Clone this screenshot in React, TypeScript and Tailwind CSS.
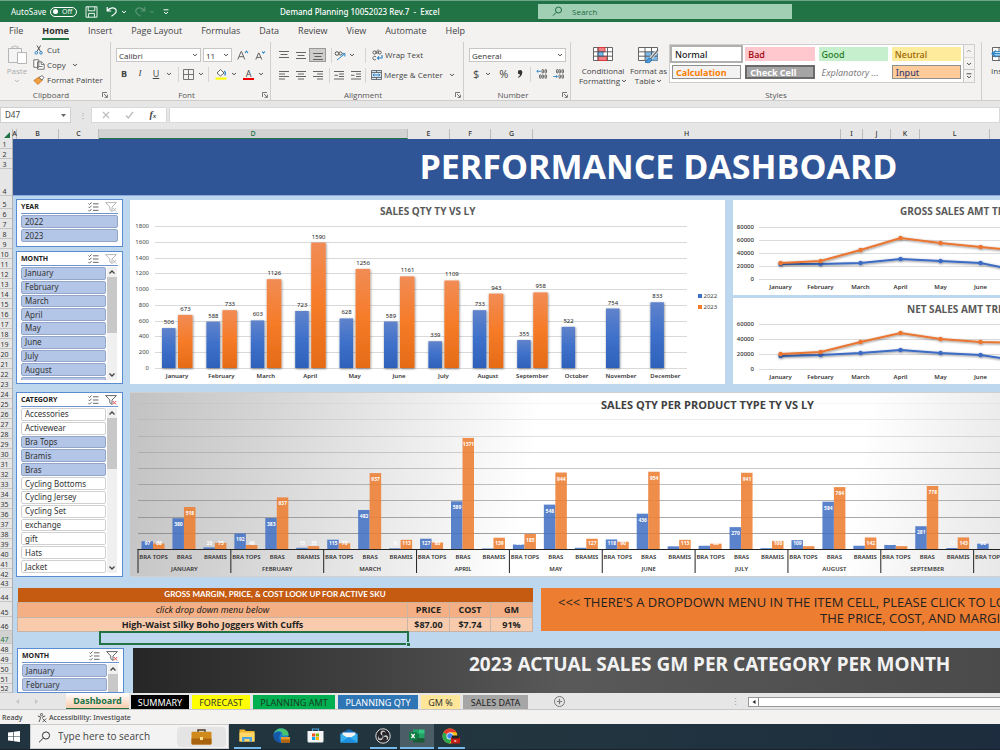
import type { ReactNode } from "react";

/* ---------- small shared pieces ---------- */

function Caret({ className = "text-[#555]" }: { className?: string }) {
  return (
    <svg width="6" height="4" viewBox="0 0 6 4" className={`shrink-0 ${className}`}>
      <path d="M1 1l2 1.8L5 1" fill="none" stroke="currentColor" strokeWidth="1" />
    </svg>
  );
}

function Divider() {
  return <span className="h-[15px] w-px bg-[#d6d4d2]" />;
}

function IconButton({ label, children, className = "" }: { label: string; children: ReactNode; className?: string }) {
  return (
    <button aria-label={label} className={`flex items-center justify-center ${className}`}>
      {children}
    </button>
  );
}

function Picker({ label, value, className }: { label: string; value: string; className: string }) {
  return (
    <span className={`flex items-center border border-[#c8c6c4] bg-white pr-[2px] ${className}`}>
      <select aria-label={label} defaultValue={value} className="min-w-0 flex-1 appearance-none bg-transparent pl-[2px] text-[8px] leading-[11px] text-[#333] outline-none">
        <option>{value}</option>
      </select>
      <Caret />
    </span>
  );
}

function Group({ name, launcher, className, children }: { name: string; launcher?: boolean; className: string; children: ReactNode }) {
  return (
    <section aria-label={name} className={`flex shrink-0 flex-col border-r border-[#d0cecc] ${className}`}>
      <div className="flex-1">{children}</div>
      <div className="flex h-[10px] items-center">
        <span className="flex-1 text-center text-[8px] leading-[10px] text-[#555]">{name}</span>
        {launcher && (
          <IconButton label={`${name} settings`} className="mr-[2px]">
            <svg width="6" height="6" viewBox="0 0 6 6" fill="none" stroke="#666" strokeWidth="0.9">
              <path d="M0.5 5V0.5H5M2 2l3 3M5.4 2.6V5.4H2.6" />
            </svg>
          </IconButton>
        )}
      </div>
    </section>
  );
}

/* ---------- title bar and ribbon ---------- */

function TitleBar() {
  return (
    <header className="flex h-[22px] shrink-0 items-center overflow-hidden border-t border-[#6da588] bg-[#217346] text-[8px] text-white">
      <div className="flex w-[280px] shrink-0 items-center pl-[11px]">
        <span className="w-[39px] font-['Noto_Sans',sans-serif]">AutoSave</span>
        <button role="switch" aria-checked="false" aria-label="AutoSave" className="flex h-[10px] w-[27px] items-center gap-[4px] rounded-full border border-white pl-[2px] text-[7px] leading-[8px]">
          <span className="size-[5px] rounded-full bg-white" />
          Off
        </button>
        <IconButton label="Save" className="ml-[8px]">
          <svg width="13" height="12" viewBox="0 0 13 12" fill="none" stroke="#fff" strokeWidth="0.9">
            <path d="M1 .8h11v10.4H1zM3.2.8v4h6.6v-4M3.6 11.2V7.4h5.8v3.8" />
          </svg>
        </IconButton>
        <IconButton label="Undo" className="ml-[8px] gap-[3px]">
          <svg width="12" height="11" viewBox="0 0 12 11" fill="none" stroke="#fff" strokeWidth="1.2">
            <path d="M1.2 1v4h4M1.4 4.800C3.400 2 7 1 9.200 2.800c2 1.800 1.600 4.200-3.700 7.500" />
          </svg>
          <Caret className="text-white" />
        </IconButton>
        <IconButton label="Redo" className="ml-[7px] gap-[3px] opacity-25">
          <svg width="12" height="11" viewBox="0 0 12 11" fill="none" stroke="#fff" strokeWidth="1.2">
            <path d="M10.800 1v4h-4M10.600 4.800C8.600 2 5 1 2.800 2.800c-2 1.800-1.600 4.200 3.700 7.500" />
          </svg>
          <Caret className="text-white" />
        </IconButton>
        <IconButton label="Customize toolbar" className="ml-[8px]">
          <svg width="6" height="6" viewBox="0 0 6 6" fill="none" stroke="#fff">
            <path d="M.5.8h5M1 3l2 1.800L5 3" />
          </svg>
        </IconButton>
      </div>
      <h1 className="w-[258px] shrink-0 font-['Noto_Sans',sans-serif] text-[8px] font-medium whitespace-nowrap">Demand Planning 10052023 Rev.7 &nbsp;-&nbsp; Excel</h1>
      <label className="flex h-[15px] w-[254px] items-center bg-[#a0cfb4] pl-[14px]">
        <svg width="11" height="11" viewBox="0 0 11 11" fill="none" stroke="#1e6b41" strokeWidth="1">
          <circle cx="6.500" cy="4" r="3" />
          <path d="M4.300 6.300L1 9.600" />
        </svg>
        <input aria-label="Search" placeholder="Search" className="ml-[9px] w-40 bg-transparent text-[8px] outline-none placeholder:text-[#1e6b41]" />
      </label>
    </header>
  );
}

const menu = ["File", "Home", "Insert", "Page Layout", "Formulas", "Data", "Review", "View", "Automate", "Help"];

function MenuTabs() {
  return (
    <nav className="flex h-[20px] shrink-0 items-start gap-[19px] bg-[#f3f2f1] pt-[2px] pl-[9px] text-[9px] leading-[14px] text-[#444]">
      {menu.map((m) => (
        <a key={m} href="#" className={m === "Home" ? "border-b-2 border-[#217346] font-bold text-[#333]" : "border-b-2 border-transparent"}>
          {m}
        </a>
      ))}
    </nav>
  );
}

function Lines({ d, box }: { d: string; box?: boolean }) {
  return (
    <span className={`flex h-[14px] w-[17px] items-center justify-center ${box ? "border border-[#999] bg-[#cfcdcb]" : ""}`}>
      <svg width="10" height="10" viewBox="0 0 10 10" fill="none" stroke="#555" strokeWidth="0.9">
        <path d={d} />
      </svg>
    </span>
  );
}

function ClipboardGroup() {
  return (
    <Group name="Clipboard" launcher className="w-[111px]">
      <div className="flex pl-[8px]">
        <button className="flex w-[18px] flex-col items-center pt-[3px] text-[8px] leading-[12px] text-[#aaa]">
          <svg width="21" height="20" viewBox="0 0 21 20" fill="#f4f4f4" stroke="#b5b5b5">
            <path d="M1.500 3.500h13v14h-13z" />
            <path d="M5 3.500V1.800h1.800C7 .5 9 .5 9.200 1.800H11v1.700z" />
            <path d="M10.500 7.500h9v11h-9z" fill="#fff" />
          </svg>
          Paste
          <Caret className="mt-[2px] text-[#bbb]" />
        </button>
        <div className="ml-[7px] flex flex-col text-[8px] leading-[15px] text-[#444]">
          <button className="flex items-center gap-[3px]">
            <svg width="11" height="10" viewBox="0 0 11 10" fill="none">
              <path d="M4 .5l3.500 6M7.500.5L4 6.500" stroke="#555" />
              <circle cx="3.300" cy="7.800" r="1.300" stroke="#2e86c8" />
              <circle cx="8" cy="7.800" r="1.300" stroke="#2e86c8" />
            </svg>
            Cut
          </button>
          <button className="flex items-center gap-[2px]">
            <svg width="12" height="11" viewBox="0 0 12 11" fill="#fff" stroke="#666" strokeWidth="0.900">
              <path d="M.8.8h5v7.500h-5zM4.500 2.800h4l2.700 2.400v5H4.500z" />
              <path d="M8.200 2.800v2.600h3M6 7.500h3.500" />
            </svg>
            Copy <Caret className="ml-[4px] text-[#555]" />
          </button>
          <button className="flex items-center gap-[2px] whitespace-nowrap">
            <svg width="12" height="10" viewBox="0 0 12 10">
              <path d="M6 2l3.500 3L5 9.500.8 5.500z" fill="#f0a040" stroke="#c0641a" strokeWidth="0.700" />
              <path d="M6 2.500L9 .6l2 1.800L9 5z" fill="#fff" stroke="#555" strokeWidth="0.800" />
            </svg>
            Format Painter
          </button>
        </div>
      </div>
    </Group>
  );
}

function FontGroup() {
  return (
    <Group name="Font" launcher className="w-[160px]">
      <div className="flex items-center gap-[2px] pt-[6px] pl-[5px]">
        <Picker label="Font name" value="Calibri" className="h-[14px] w-[85px]" />
        <Picker label="Font size" value="11" className="h-[14px] w-[29px]" />
        <button aria-label="Increase font size" className="ml-[3px]">
          <svg width="12" height="11" viewBox="0 0 12 11" fill="none">
            <path d="M.8 9.500L4.100 1.500h.4l3.300 8M2.200 6.700h4.200" stroke="#555" strokeWidth="0.900" />
            <path d="M8 3l1.500-1.800L11 3" stroke="#2e86c8" strokeWidth="1.100" />
          </svg>
        </button>
        <button aria-label="Decrease font size" className="ml-[4px]">
          <svg width="11" height="11" viewBox="0 0 11 11" fill="none">
            <path d="M.8 9.500L3.600 3H4l2.800 6.500M2 7.400h3.700" stroke="#555" strokeWidth="0.900" />
            <path d="M7 1.500L8.500 3.200 10 1.500" stroke="#2e86c8" strokeWidth="1.100" />
          </svg>
        </button>
      </div>
      <div className="flex h-[24px] items-center pl-[9px] text-[9px] text-[#444]">
        <button className="w-[8px] font-bold">B</button>
        <button className="ml-[8px] w-[8px] font-['Liberation_Serif',serif] italic">I</button>
        <button className="ml-[8px] w-[8px] underline">U</button>
        <Caret className="mx-[6px] text-[#555]" />
        <Divider />
        <IconButton label="Borders" className="ml-[4px]">
          <svg width="11" height="11" viewBox="0 0 11 11" fill="none" stroke="#666" strokeWidth="0.900">
            <path d="M.5.5h10v10H.5zM5.500.5v10M.5 5.500h10" />
          </svg>
        </IconButton>
        <Caret className="mx-[4px] text-[#555]" />
        <Divider />
        <IconButton label="Fill color" className="ml-[6px]">
          <svg width="12" height="12" viewBox="0 0 12 12">
            <path d="M2 5l3.500-3.500L9 5 5.500 8z" fill="#fff" stroke="#555" strokeWidth="0.900" />
            <path d="M9 3c1.600 1 1.600 3 .7 4.500" fill="none" stroke="#2e86c8" strokeWidth="1.300" />
            <path d="M.5 9.500h11v2.200H.5z" fill="#ff0" />
          </svg>
        </IconButton>
        <Caret className="mx-[4px] text-[#555]" />
        <button aria-label="Font color" className="ml-[2px] w-[11px] border-b-2 border-[#e00] text-[9px] leading-[9px]">
          A
        </button>
        <Caret className="ml-[4px] text-[#555]" />
      </div>
    </Group>
  );
}

function AlignmentGroup() {
  return (
    <Group name="Alignment" launcher className="w-[193px]">
      <div className="flex h-[26px] items-center pl-[4px] text-[8px] text-[#444]">
        <Lines d="M0 1.500h10M1.500 4.500h7M0 7.500h10" />
        <Lines d="M0 2.500h10M1.500 5.500h7M0 8.500h10" />
        <Lines box d="M0 3.500h10M1.500 6.500h7M0 9.500h10" />
        <span className="ml-[5px]" />
        <Divider />
        <IconButton label="Orientation" className="ml-[2px]">
          <svg width="12" height="11" viewBox="0 0 12 11" fill="none">
            <circle cx="3" cy="3.500" r="1.800" stroke="#555" />
            <circle cx="6.500" cy="3.500" r="1.600" stroke="#555" />
            <path d="M3 10l7.500-6M10.800 6.500l.2-3-3 .3" stroke="#2e86c8" />
          </svg>
        </IconButton>
        <Caret className="mx-[3px] text-[#555]" />
        <span className="ml-[7px]" />
        <Divider />
        <button className="ml-[6px] flex items-center gap-[2px] whitespace-nowrap">
          <svg width="11" height="12" viewBox="0 0 11 12" fill="none" stroke="#555" strokeWidth="0.900">
            <circle cx="2.500" cy="3.500" r="1.600" />
            <path d="M4.200 1.800V5M6 .5V5" />
            <circle cx="7.700" cy="3.500" r="1.500" />
            <path d="M4 7.800C2 6.500.8 8 .9 9.300c.1 1.500 1.600 2.200 3 1.200" />
            <path d="M10 6v3H5.500M7 7.500L5.500 9 7 10.500" stroke="#2e86c8" strokeWidth="1.200" />
          </svg>
          Wrap Text
        </button>
      </div>
      <div className="flex h-[14px] items-center pl-[4px] text-[8px] text-[#444]">
        <Lines d="M0 1.500h10M0 4h6M0 6.500h10M0 9h6" />
        <Lines d="M0 1.500h10M2 4h6M0 6.500h10M2 9h6" />
        <Lines d="M0 1.500h10M4 4h6M0 6.500h10M4 9h6" />
        <span className="ml-[3px]" />
        <Divider />
        <Lines d="M0 1.500h10M5 4h5M5 6.500h5M0 9h10M4 5.300H.5" />
        <Lines d="M0 1.500h10M5 4h5M5 6.500h5M0 9h10M0 5.300h3.500" />
        <span className="ml-px" />
        <Divider />
        <button className="ml-[5px] flex items-center gap-[2px] whitespace-nowrap">
          <svg width="11" height="10" viewBox="0 0 11 10" fill="#cfe6f7" stroke="#555" strokeWidth="0.800">
            <path d="M.5.5h10v9H.5z" />
            <path d="M.5 2.500h10M.5 7.500h10M5.500.5v2M5.500 7.500v2" />
            <path d="M2 5h7M3.500 3.800L2 5l1.500 1.200M7.500 3.800L9 5 7.500 6.200" stroke="#2277bb" />
          </svg>
          Merge &amp; Center
        </button>
        <Caret className="ml-[6px] text-[#555]" />
      </div>
    </Group>
  );
}

function NumberGroup() {
  return (
    <Group name="Number" launcher className="w-[107px]">
      <div className="pt-[6px] pl-[5px]">
        <Picker label="Number format" value="General" className="h-[14px] w-[97px]" />
      </div>
      <div className="flex h-[24px] items-center pl-[9px] text-[11px] text-[#444]">
        <button>$</button>
        <Caret className="mx-[6px] text-[#555]" />
        <button className="ml-[2px]">%</button>
        <button aria-label="Comma style" className="ml-[9px]">
          <svg width="6" height="8" viewBox="0 0 6 8" fill="#333">
            <path d="M3 0a2.200 2.200 0 012.300 2.600C5.200 5 3.600 7 1.300 7.800l-.4-.8C2.200 6.300 3 5.400 3 4.400A2.200 2.200 0 013 0z" />
          </svg>
        </button>
        <span className="ml-[7px]" />
        <Divider />
        <IconButton label="Increase decimal" className="ml-[5px]">
          <svg width="11" height="10" viewBox="0 0 11 10" fill="none" stroke="#555" strokeWidth="0.900">
            <rect x="6" y=".5" width="1.600" height="3.500" rx=".8" />
            <rect x="9" y=".5" width="1.500" height="3.500" rx=".7" />
            <rect x="3.500" y="5.800" width="1.600" height="3.500" rx=".8" />
            <rect x="6" y="5.800" width="1.600" height="3.500" rx=".8" />
            <rect x="9" y="5.800" width="1.500" height="3.500" rx=".7" />
            <path d="M5 2.300H.8M2.200 1L.8 2.300l1.400 1.300" stroke="#2e86c8" />
          </svg>
        </IconButton>
        <IconButton label="Decrease decimal" className="ml-[6px]">
          <svg width="11" height="10" viewBox="0 0 11 10" fill="none" stroke="#555" strokeWidth="0.900">
            <rect x="3.500" y=".5" width="1.600" height="3.500" rx=".8" />
            <rect x="6" y=".5" width="1.600" height="3.500" rx=".8" />
            <rect x="9" y=".5" width="1.500" height="3.500" rx=".7" />
            <rect x="6" y="5.800" width="1.600" height="3.500" rx=".8" />
            <rect x="9" y="5.800" width="1.500" height="3.500" rx=".7" />
            <path d="M.3 7.500h4M3 6.200l1.400 1.300L3 8.800" stroke="#2e86c8" />
          </svg>
        </IconButton>
      </div>
    </Group>
  );
}

const cellStyles = [
  { name: "Normal", cls: "bg-white text-[#222] font-medium outline outline-2 outline-[#b0b0b0]" },
  { name: "Bad", cls: "bg-[#ffc7ce] font-medium text-[#9c0006]" },
  { name: "Good", cls: "bg-[#c6efce] font-medium text-[#227a22]" },
  { name: "Neutral", cls: "bg-[#ffeb9c] font-medium text-[#9c6500]" },
  { name: "Calculation", cls: "border border-[#8f8f8f] bg-[#f2f2f2] font-bold text-[#fa7d00]" },
  { name: "Check Cell", cls: "border-2 border-[#6a6a6a] bg-[#a5a5a5] font-bold text-white" },
  { name: "Explanatory ...", cls: "bg-white italic text-[#808080]" },
  { name: "Input", cls: "border border-[#8f8f8f] bg-[#ffcc99] font-medium text-[#3f3f76]" },
];

function StylesGroup() {
  return (
    <Group name="Styles" className="w-[411px]">
      <div className="flex pl-[7px]">
        <button className="flex w-[50px] flex-col items-center pt-[5px] text-[8px] leading-[10px] text-[#444]">
          <svg width="20" height="14" viewBox="0 0 20 14" className="mb-[5px]" strokeWidth="0.900">
            <path d="M.5.5h19v13H.5z" fill="#fff" stroke="#555" />
            <path d="M5 .5h7v4.300H5zM5 9.200h9v4.300H5z" fill="#f47c80" stroke="#d33" />
            <path d="M5 4.800h5v4.400H5z" fill="#7db9e8" stroke="#2e75b6" />
            <path d="M.5 4.800h19M.5 9.200h19M5 .5v13M14.500.5v13" fill="none" stroke="#555" />
          </svg>
          Conditional
          <span className="flex items-center gap-[1px]">
            Formatting <Caret />
          </span>
        </button>
        <button className="flex w-[41px] flex-col items-center pt-[5px] text-[8px] leading-[10px] whitespace-nowrap text-[#444]">
          <svg width="21" height="17" viewBox="0 0 21 17" className="mb-[2px]" strokeWidth="0.900">
            <path d="M.5.500h19v13H.5z" fill="#fff" stroke="#555" />
            <path d="M7 4.800h12.500v8.700H7z" fill="#7db9e8" />
            <path d="M.5 4.800h19M.5 9.200h19M7 .5v13M13.500.5v13" fill="none" stroke="#555" />
            <path d="M19.500 3.500l-7 8" stroke="#eee" strokeWidth="3" />
            <path d="M20 3l-7.500 8.800" stroke="#666" strokeWidth="1.200" />
            <path d="M12 11c-2 0-2 2.500-5 4 3 1.500 6.500.5 6.500-2.500z" fill="#4a9be0" stroke="#2368a0" />
          </svg>
          Format as
          <span className="flex items-center gap-[1px]">
            Table <Caret />
          </span>
        </button>
        <div className="mt-[2px] flex h-[39px] w-[306px] border border-[#d0cecc] bg-white">
          <div className="grid flex-1 grid-cols-4 gap-x-[4px] gap-y-[3px] p-[2px]">
            {cellStyles.map((s) => (
              <button key={s.name} className={`flex h-[14px] items-center overflow-hidden px-[3px] font-['Noto_Sans',sans-serif] text-[9px] leading-[11px] whitespace-nowrap ${s.cls}`}>
                {s.name}
              </button>
            ))}
          </div>
          <div className="flex w-[11px] flex-col divide-y divide-[#c8c6c4] border-l border-[#c8c6c4] bg-[#f3f2f1]">
            <IconButton label="Previous styles" className="flex-1 opacity-50">
              <Caret className="rotate-180 text-[#555]" />
            </IconButton>
            <IconButton label="Next styles" className="flex-1">
              <Caret />
            </IconButton>
            <IconButton label="All styles" className="flex-1">
              <svg width="6" height="6" viewBox="0 0 6 6" fill="none" stroke="#555">
                <path d="M.5.8h5M1 3l2 1.800L5 3" />
              </svg>
            </IconButton>
          </div>
        </div>
      </div>
    </Group>
  );
}

function Ribbon() {
  return (
    <div className="flex h-[59px] shrink-0 overflow-hidden border-b border-[#cfcdcb] bg-[#f3f2f1]">
      <ClipboardGroup />
      <FontGroup />
      <AlignmentGroup />
      <NumberGroup />
      <StylesGroup />
      <button className="flex shrink-0 flex-col items-start gap-[5px] pt-[5px] pl-[9px] text-[8px] leading-[10px] text-[#444]">
        <svg width="20" height="14" viewBox="0 0 20 14" fill="#fff" stroke="#555" strokeWidth="0.900">
          <path d="M1.500.5h18v13h-18zM8 .5v13M14 .5v13M1.500 9.500h18" />
          <path d="M3 4.500h16v4.400H3z" fill="#bfe0f5" stroke="#2e86c8" />
          <path d="M5 3.500L1 6.700 5 10M1 6.700h8" fill="none" stroke="#2e86c8" strokeWidth="1.300" />
        </svg>
        Insert
      </button>
    </div>
  );
}

function FormulaBar() {
  return (
    <div className="flex h-[28px] shrink-0 items-center bg-[#e6e6e6] text-[8px] text-[#444]">
      <span className="flex h-[16px] w-[71px] items-center border border-[#d0d0d0] bg-white pr-[4px]">
        <input aria-label="Name box" defaultValue="D47" className="min-w-0 flex-1 pl-[4px] font-['Noto_Sans',sans-serif] text-[8px] outline-none" />
        <svg width="5" height="3" viewBox="0 0 5 3" fill="#666">
          <path d="M0 0h5L2.500 3z" />
        </svg>
      </span>
      <span className="mx-[8px] w-[4px] text-center text-[#999]">⋮</span>
      <span className="flex h-[16px] w-[76px] items-center justify-around border border-[#d9d9d9] bg-white px-[2px]">
        <IconButton label="Cancel">
          <svg width="8" height="8" viewBox="0 0 8 8" stroke="#bbb" strokeWidth="1.100">
            <path d="M1 1l6 6M7 1L1 7" />
          </svg>
        </IconButton>
        <IconButton label="Enter">
          <svg width="9" height="8" viewBox="0 0 9 8" fill="none" stroke="#bbb" strokeWidth="1.300">
            <path d="M1 4.500L3.300 7 8 1" />
          </svg>
        </IconButton>
        <button className="font-['Liberation_Serif',serif] text-[10px] leading-[12px] font-bold text-[#444] italic">
          f<span className="text-[7px]">x</span>
        </button>
      </span>
      <input aria-label="Formula" className="ml-[2px] h-[16px] min-w-0 flex-1 border border-[#d9d9d9] bg-white outline-none" />
    </div>
  );
}

const columns: { name: string; w: string; on?: boolean }[] = [
  { name: "A", w: "w-[4px]" },
  { name: "B", w: "w-[42px]" },
  { name: "C", w: "w-[40px]" },
  { name: "D", w: "w-[309px]", on: true },
  { name: "E", w: "w-[42px]" },
  { name: "F", w: "w-[41px]" },
  { name: "G", w: "w-[42px]" },
  { name: "H", w: "w-[308px]" },
  { name: "I", w: "w-[22px]" },
  { name: "J", w: "w-[28px]" },
  { name: "K", w: "w-[29px]" },
  { name: "L", w: "w-[70px]" },
  { name: "", w: "w-[70px]" },
];

function ColumnHeads() {
  return (
    <div className="flex h-[10px] shrink-0 overflow-hidden bg-[#e6e6e6] font-['Noto_Sans',sans-serif] text-[7px] leading-[10px] font-medium text-[#333]">
      <span className="flex w-[13px] shrink-0 items-end justify-end border-r border-[#bbb] pr-[2px] pb-px">
        <svg width="6" height="6" viewBox="0 0 6 6" fill="#217346">
          <path d="M6 0v6H0z" />
        </svg>
      </span>
      {columns.map((c) => (
        <span
          key={c.name}
          className={`flex shrink-0 justify-center border-r border-[#bbb] ${c.w} ${c.on ? "border-b border-b-[#217346] bg-[#d2d2d2] text-[#217346]" : ""}`}
        >
          {c.name}
        </span>
      ))}
    </div>
  );
}

function rowHeight(n: number) {
  if (n === 4) return "h-[27px]";
  if (n === 5 || n === 47) return "h-[13px]";
  if (n === 43 || n === 52) return "h-[9px]";
  if (n === 44 || n === 46) return "h-[14px]";
  if (n === 45) return "h-[15px]";
  return "h-[10px]";
}

function RowHeads() {
  return (
    <div className="w-[13px] shrink-0 border-r border-[#b0b0b0] bg-[#e6e6e6] font-['Noto_Sans',sans-serif] text-[7px] leading-[7px] text-[#333]">
      {Array.from({ length: 52 }, (_, i) => i + 1).map((n) => (
        <div
          key={n}
          className={`flex items-end justify-center border-b border-[#c4c4c4] pr-[3px] ${rowHeight(n)} ${n === 47 ? "bg-[#d2d2d2] text-[#217346]" : ""}`}
        >
          {n}
        </div>
      ))}
    </div>
  );
}

/* ---------- slicers ---------- */

function SlicerHead({ title, active }: { title: string; active?: boolean }) {
  return (
    <div className="flex h-[13px] items-center border-b border-[#6f93cf]">
      <h2 className="flex-1 text-[7px] leading-[12px] font-bold text-[#222]">{title}</h2>
      <IconButton label={`${title} multi-select`} className="mr-[6px]">
        <svg width="11" height="10" viewBox="0 0 11 10" fill="none" stroke="#555" strokeWidth="0.900">
          <path d="M.5 1.500l1 1 2-2M.5 4.800l1 1 2-2M.5 8.200l1 1 2-2M5 1.800h5.500M5 5h5.500M5 8.300h5.500" />
        </svg>
      </IconButton>
      <IconButton label={`Clear ${title} filter`} className="mr-px">
        <svg width="12" height="10" viewBox="0 0 12 10" fill="none" strokeWidth="0.900">
          <path d="M.6.6h10.800L7 5v4.400L4.800 7.800V5z" stroke={active ? "#555" : "#b0b0b0"} />
          <path d="M7.800 6l3.400 3.500M11.200 6L7.800 9.500" stroke={active ? "#e04040" : "#b0b0b0"} />
        </svg>
      </IconButton>
    </div>
  );
}

function SlicerItem({ label, on = true }: { label: string; on?: boolean }) {
  return (
    <button
      className={`flex min-h-0 flex-1 items-center overflow-hidden rounded-[2px] border pl-[3px] text-left text-[8px] leading-[10px] text-[#333] ${
        on ? "border-[#93a5c8] bg-[#b4c6e7]" : "border-[#d0d0d0] bg-white"
      }`}
    >
      {label}
    </button>
  );
}

function ScrollTrack({ thumb, down = true }: { thumb: string; down?: boolean }) {
  return (
    <div className="mr-px flex w-[10px] shrink-0 flex-col items-center bg-[#f0f0f0]">
      <svg width="8" height="10" viewBox="0 0 8 10" fill="none" stroke="#444" strokeWidth="1.300">
        <path d="M1.500 6.500L4 4l2.500 2.500" />
      </svg>
      <div className={`w-full bg-[#c8c8c8] ${thumb}`} />
      {down && (
        <svg width="8" height="10" viewBox="0 0 8 10" fill="none" stroke="#444" strokeWidth="1.300" className="mt-auto">
          <path d="M1.500 3.500L4 6l2.500-2.500" />
        </svg>
      )}
    </div>
  );
}

const slicerBox = "flex flex-col overflow-hidden border border-[#5b8bd0] bg-white px-[4px] pt-px font-['Noto_Sans',sans-serif]";

function YearSlicer() {
  return (
    <section className={`${slicerBox} h-[48px]`}>
      <SlicerHead title="YEAR" />
      <div className="mt-px flex h-[27px] flex-col gap-px">
        <SlicerItem label="2022" />
        <SlicerItem label="2023" />
      </div>
    </section>
  );
}

const months = ["January", "February", "March", "April", "May", "June", "July", "August", "September", "October", "November", "December"];

function MonthSlicer() {
  return (
    <section className={`${slicerBox} h-[133px]`}>
      <SlicerHead title="MONTH" />
      <div className="mt-px flex h-[113px] justify-between">
        <div className="flex w-[85px] flex-col gap-px">
          <div className="flex h-[109px] shrink-0 flex-col gap-px">
            {months.slice(0, 8).map((m) => (
              <SlicerItem key={m} label={m} />
            ))}
          </div>
          <div className="h-[3px] rounded-t-[2px] border border-b-0 border-[#93a5c8] bg-[#b4c6e7]" />
        </div>
        <ScrollTrack thumb="h-[56px]" />
      </div>
    </section>
  );
}

const categories = ["Accessories", "Activewear", "Bra Tops", "Bramis", "Bras", "Cycling Bottoms", "Cycling Jersey", "Cycling Set", "exchange", "gift", "Hats", "Jacket"];
const chosen = ["Bra Tops", "Bramis", "Bras"];

function CategorySlicer() {
  return (
    <section className={`${slicerBox} h-[185px] w-[107px] shrink-0`}>
      <SlicerHead title="CATEGORY" active />
      <div className="mt-px flex h-[165px] justify-between">
        <div className="flex w-[85px] flex-col gap-px">
          {categories.map((c) => (
            <SlicerItem key={c} label={c} on={chosen.includes(c)} />
          ))}
        </div>
        <ScrollTrack thumb="h-[51px]" />
      </div>
    </section>
  );
}

function LowerMonthSlicer() {
  return (
    <section className={`${slicerBox} h-[45px] w-[107px] shrink-0`}>
      <SlicerHead title="MONTH" active />
      <div className="mt-px flex h-[29px] justify-between">
        <div className="flex w-[85px] flex-col gap-px">
          <div className="flex h-[27px] shrink-0 flex-col gap-px">
            <SlicerItem label="January" />
            <SlicerItem label="February" />
          </div>
          <div className="h-[3px] rounded-t-[2px] border border-b-0 border-[#93a5c8] bg-[#b4c6e7]" />
        </div>
        <ScrollTrack thumb="flex-1" down={false} />
      </div>
    </section>
  );
}

/* ---------- charts ---------- */

const qty: [number, number | null][] = [
  [506, 673],
  [588, 733],
  [603, 1126],
  [723, 1590],
  [628, 1256],
  [589, 1161],
  [339, 1109],
  [733, 943],
  [355, 958],
  [522, null],
  [754, null],
  [833, null],
];

function QtyChart() {
  const base = 168;
  const y = (v: number) => base - v * 0.0789;
  return (
    <svg width="595" height="184" viewBox="0 0 595 184" className="shrink-0 bg-white font-['Noto_Sans',sans-serif]" fontSize="6" role="img" aria-label="Sales quantity this year versus last year">
      <defs>
        <linearGradient id="blueBar" x1="0" y1="0" x2="0" y2="1">
          <stop offset="0" stopColor="#6083cb" />
          <stop offset="0.500" stopColor="#3e70ca" />
          <stop offset="1" stopColor="#2e61ba" />
        </linearGradient>
        <linearGradient id="orangeBar" x1="0" y1="0" x2="0" y2="1">
          <stop offset="0" stopColor="#f18c55" />
          <stop offset="0.500" stopColor="#f67b28" />
          <stop offset="1" stopColor="#e56b17" />
        </linearGradient>
        <filter id="soft" x="-20%" y="-5%" width="150%" height="115%">
          <feDropShadow dx="0.500" dy="0.800" stdDeviation="1" floodOpacity="0.5" />
        </filter>
      </defs>
      <text x="250" y="15" fontSize="10" fontWeight="700" fill="#595959" className="font-['Open_Sans',sans-serif]">
        SALES QTY TY VS LY
      </text>
      {Array.from({ length: 10 }, (_, i) => i * 200).map((v) => (
        <g key={v}>
          <path d={`M25 ${Math.round(y(v)) + 0.5}H557`} stroke="#d9d9d9" />
          <text x="19" y={y(v) + 2} textAnchor="end" fill="#444">
            {v}
          </text>
        </g>
      ))}
      {qty.map(([a, b], i) => {
        const x = 32 + i * 44.4;
        return (
          <g key={i}>
            <rect x={x} y={y(a)} width="13.500" height={base - y(a)} fill="url(#blueBar)" filter="url(#soft)" />
            <text x={x + 7} y={y(a) - 4} textAnchor="middle" fill="#222">
              {a}
            </text>
            {b !== null && (
              <>
                <rect x={x + 16} y={y(b)} width="14.500" height={base - y(b)} fill="url(#orangeBar)" filter="url(#soft)" />
                <text x={x + 23.5} y={y(b) - 4} textAnchor="middle" fill="#222">
                  {b}
                </text>
              </>
            )}
            <text x={x + 15} y="178" textAnchor="middle" fontWeight="600" fill="#333">
              {months[i]}
            </text>
          </g>
        );
      })}
      <rect x="568" y="94" width="4" height="4" fill="#3e70ca" />
      <text x="573.500" y="98" fill="#444">
        2022
      </text>
      <rect x="568" y="105" width="4" height="4" fill="#f67b28" />
      <text x="573.500" y="109" fill="#444">
        2023
      </text>
    </svg>
  );
}

interface TrendProps {
  title: string;
  titleX: number;
  height: number;
  base: number;
  step: number;
  ticks: number;
  labelY: number;
  orange: number[];
  blue: number[];
}

function TrendChart({ title, titleX, height, base, step, ticks, labelY, orange, blue }: TrendProps) {
  const px = (i: number) => 47.5 + i * 40;
  return (
    <svg width="330" height={height} viewBox={`0 0 330 ${height}`} className="shrink-0 bg-white font-['Noto_Sans',sans-serif]" fontSize="6" role="img" aria-label={title}>
      <text x={titleX} y="15" fontSize="10" fontWeight="700" fill="#595959" className="font-['Open_Sans',sans-serif]">
        {title}
      </text>
      {Array.from({ length: ticks }, (_, i) => (
        <g key={i}>
          <path d={`M26 ${Math.round(base - i * step) + 0.5}H330`} stroke="#dcdcdc" />
          <text x="21" y={base - i * step + 2} textAnchor="end" fontWeight="500" fill="#333">
            {i * 20000}
          </text>
        </g>
      ))}
      {[
        { pts: blue, color: "#3c6cc4" },
        { pts: orange, color: "#ea7632" },
      ].map(({ pts, color }) => (
        <g key={color} fill={color} filter="url(#soft)">
          <polyline points={pts.map((v, i) => `${px(i)},${v}`).join(" ")} fill="none" stroke={color} strokeWidth="2" />
          {pts.map((v, i) => (
            <circle key={i} cx={px(i)} cy={v} r="2.200" />
          ))}
        </g>
      ))}
      {months.slice(0, 6).map((m, i) => (
        <text key={m} x={px(i)} y={labelY} textAnchor="middle" fontWeight="600" fill="#333">
          {m}
        </text>
      ))}
    </svg>
  );
}

/* Pairs of last-year / this-year units for Bra Tops, Bras and Bramis, month by month. */
const productMonths: { name: string; pairs: [number, number][] }[] = [
  { name: "JANUARY", pairs: [[97, 68], [380, 518], [20, 75]] },
  { name: "FEBRUARY", pairs: [[192, 49], [383, 637], [15, 35]] },
  { name: "MARCH", pairs: [[115, 70], [482, 937], [8, 113]] },
  { name: "APRIL", pairs: [[127, 80], [589, 1371], [7, 139]] },
  { name: "MAY", pairs: [[55, 185], [548, 944], [15, 127]] },
  { name: "JUNE", pairs: [[118, 90], [436, 954], [33, 113]] },
  { name: "JULY", pairs: [[40, 66], [270, 941], [10, 100]] },
  { name: "AUGUST", pairs: [[109, 35], [584, 764], [40, 142]] },
  { name: "SEPTEMBER", pairs: [[50, 35], [281, 778], [12, 143]] },
  { name: "OCTOBER", pairs: [[66, 0]] },
];
const products = ["BRA TOPS", "BRAS", "BRAMIS"];

function ProductChart() {
  const base = 157;
  const y = (v: number) => base - v * 0.081;
  return (
    <svg width="940" height="185" viewBox="0 0 940 185" className="font-['Noto_Sans',sans-serif]" fontSize="6" role="img" aria-label="Sales quantity per product type">
      <text x="471" y="17" fontSize="11" fontWeight="700" fill="#404040" className="font-['Open_Sans',sans-serif]">
        SALES QTY PER PRODUCT TYPE TY VS LY
      </text>
      {Array.from({ length: 9 }, (_, i) => (
        <path key={i} d={`M8 ${Math.round(base - (i + 1) * 16.2) + 0.5}H940`} stroke="#7f7f7f" strokeOpacity={0.75 - i * 0.085} />
      ))}
      {productMonths.map((m, i) => {
        const left = 8 + i * 92.85;
        return (
          <g key={m.name}>
            {m.pairs.map(([a, b], k) => {
              const x = left + k * 30.95 + 3.5;
              return (
                <g key={k}>
                  <rect x={x} y={y(a)} width="11.500" height={base - y(a)} fill="#4472c4" fillOpacity="0.88" />
                  <rect x={x + 11.5} y={y(b)} width="11.500" height={base - y(b)} fill="#ed7d31" fillOpacity="0.88" />
                  <g fill="#fff" fontWeight="700" textAnchor="middle" fontSize="5">
                    <text x={x + 6} y={Math.min(y(a) + 8, 153)}>{a}</text>
                    {b > 0 && <text x={x + 17.5} y={Math.min(y(b) + 8, 153)}>{b}</text>}
                  </g>
                  <text x={left + k * 30.95 + 15.5} y="167" textAnchor="middle" fontWeight="600" fill="#333">
                    {products[k]}
                  </text>
                </g>
              );
            })}
            <path d={`M${left} 157v24`} stroke="#222" />
            {m.pairs.length === 3 && (
              <text x={left + 46.4} y="179" textAnchor="middle" fontWeight="600" fill="#333">
                {m.name}
              </text>
            )}
          </g>
        );
      })}
      <path d="M7.500 157.500H940" stroke="#222" />
    </svg>
  );
}

/* ---------- sheet ---------- */

function LookupTable() {
  const cell = "border border-[#c9b3a4] p-0 text-center";
  return (
    <table className="w-[516px] shrink-0 table-fixed border-collapse text-[9px] leading-[11px] font-bold text-[#222]">
      <colgroup>
        <col />
        <col className="w-[42px]" />
        <col className="w-[41px]" />
        <col className="w-[42px]" />
      </colgroup>
      <tbody>
        <tr className="h-[14px] bg-[#c55a11] font-['Lato',sans-serif] text-[8px] text-white">
          <th colSpan={4} className="p-0">GROSS MARGIN, PRICE, &amp; COST LOOK UP FOR ACTIVE SKU</th>
        </tr>
        <tr className="h-[15px] bg-[#f4b084]">
          <th className={`${cell} font-['Noto_Sans',sans-serif] font-normal italic`}>click drop down menu below</th>
          <th className={cell}>PRICE</th>
          <th className={cell}>COST</th>
          <th className={cell}>GM</th>
        </tr>
        <tr className="h-[14px] bg-[#f8cbad]">
          <td className={cell}>High-Waist Silky Boho Joggers With Cuffs</td>
          <td className={cell}>$87.00</td>
          <td className={cell}>$7.74</td>
          <td className={cell}>91%</td>
        </tr>
      </tbody>
    </table>
  );
}

function Sheet() {
  return (
    <main className="min-w-0 flex-1 overflow-hidden bg-[#bdd7ee]">
      <div className="flex h-[57px] justify-center border-b border-[#8faadc] bg-[#2f5597]">
        <h2 className="mr-[-304px] w-full text-center text-[34px] leading-[54px] font-bold whitespace-nowrap text-white">
          PERFORMANCE DASHBOARD
        </h2>
      </div>
      <div className="flex h-[196px] items-start pt-[3px] pl-[3px]">
        <div className="flex w-[107px] shrink-0 flex-col gap-[4px]">
          <YearSlicer />
          <MonthSlicer />
        </div>
        <div className="mt-px ml-[7px] shrink-0">
          <QtyChart />
        </div>
        <div className="mt-px ml-[8px] flex shrink-0 flex-col gap-[3px]">
          <TrendChart
            title="GROSS SALES AMT TREND"
            titleX={167}
            height={95}
            base={79}
            step={13}
            ticks={5}
            labelY={89}
            orange={[63, 61, 50, 38, 43, 47, 51]}
            blue={[64, 64, 63, 59, 61, 63, 71]}
          />
          <TrendChart
            title="NET SALES AMT TREND"
            titleX={174}
            height={86}
            base={71}
            step={15}
            ticks={4}
            labelY={81}
            orange={[56, 54, 44, 35, 41, 44, 45]}
            blue={[58, 57, 55, 52, 55, 57, 63]}
          />
        </div>
      </div>
      <div className="flex h-[196px] items-start pl-[3px]">
        <CategorySlicer />
        <div className="ml-[7px] min-w-0 flex-1 overflow-hidden border-y border-[#d0d0d0] bg-[linear-gradient(100deg,#c2c2c2_0%,#d6d6d6_16%,#ffffff_46%,#ffffff_82%,#e8e8e8_100%)]">
          <div className="mt-[-1px] h-[184px]">
            <ProductChart />
          </div>
        </div>
      </div>
      <div className="flex h-[43px] gap-[8px] pl-[4px]">
        <LookupTable />
        <div className="min-w-0 flex-1 overflow-hidden bg-[#ed7d31] pt-[6px] pl-[17px] text-[13px] leading-[16px] whitespace-nowrap text-[#222]">
          <p>&lt;&lt;&lt; THERE'S A DROPDOWN MENU IN THE ITEM CELL, PLEASE CLICK TO LOOK UP</p>
          <p className="pl-[262px]">THE PRICE, COST, AND MARGIN</p>
        </div>
      </div>
      <div className="h-[17px] pl-[86px]">
        <div className="relative h-[14px] w-[310px] border-2 border-[#217346]">
          <span className="absolute -right-[3px] -bottom-[3px] size-[4px] border-t border-l border-[#bdd7ee] bg-[#217346]" />
        </div>
      </div>
      <div className="flex h-[45px] items-start overflow-hidden pl-[4px]">
        <LowerMonthSlicer />
        <div className="ml-[9px] h-[45px] min-w-0 flex-1 bg-linear-to-r from-[#262626] via-[#595959] to-[#4a4a4a] pt-[5px] pl-[336px]">
          <h2 className="font-['Noto_Sans',sans-serif] text-[19px] leading-[23px] font-bold whitespace-nowrap text-[#f2f2f2]">2023 ACTUAL SALES GM PER CATEGORY PER MONTH</h2>
        </div>
      </div>
    </main>
  );
}

/* ---------- bottom bars ---------- */

const sheetTabs = [
  { name: "SUMMARY", cls: "w-[58px] bg-black text-white" },
  { name: "FORECAST", cls: "w-[58px] bg-[#ffff00] text-[#333]" },
  { name: "PLANNING AMT", cls: "w-[82px] bg-[#00b050] text-[#1a3a24]" },
  { name: "PLANNING QTY", cls: "w-[80px] bg-[#2e75b6] text-white" },
  { name: "GM %", cls: "w-[39px] bg-[#ffe699] text-[#333]" },
  { name: "SALES DATA", cls: "w-[65px] bg-[#a6a6a6] text-[#222]" },
];

function SheetTabs() {
  return (
    <div className="flex h-[17px] shrink-0 items-start overflow-hidden border-b border-[#c8c8c8] bg-[#e6e6e6] font-['Noto_Sans',sans-serif] text-[9px]">
      <div className="flex w-[66px] shrink-0 gap-[14px] self-center pl-[15px]">
        {["M4 0L1 2.500 4 5z", "M1 0l3 2.500L1 5z"].map((d) => (
          <svg key={d} width="5" height="5" viewBox="0 0 5 5" fill="#c4c4c4">
            <path d={d} />
          </svg>
        ))}
      </div>
      <button className="h-[16px] w-[63px] shrink-0 border-b border-[#217346] bg-linear-to-b from-white to-[#f8cbad] font-bold text-[#217346]">Dashboard</button>
      <div className="flex gap-[3px] pt-[2px] pl-[2px]">
        {sheetTabs.map((t) => (
          <button key={t.name} className={`h-[14px] shrink-0 leading-[13px] whitespace-nowrap ${t.cls}`}>
            {t.name}
          </button>
        ))}
      </div>
      <IconButton label="New sheet" className="ml-[26px] self-center">
        <svg width="11" height="11" viewBox="0 0 11 11" fill="none" stroke="#777">
          <circle cx="5.500" cy="5.500" r="5" />
          <path d="M5.500 2.800v5.400M2.800 5.500h5.400" strokeWidth="1.200" />
        </svg>
      </IconButton>
      <span className="mt-[2px] mr-[8px] ml-auto shrink-0 text-[#999]">⋮</span>
      <div className="mt-[4px] flex h-[10px] w-[252px] shrink-0 border border-r-0 border-[#999] bg-white">
        <IconButton label="Scroll left" className="w-[10px] border-r border-[#888]">
          <svg width="4" height="4" viewBox="0 0 4 4" fill="#222">
            <path d="M3.500 0L.5 2l3 2z" />
          </svg>
        </IconButton>
      </div>
    </div>
  );
}

function StatusBar() {
  return (
    <div className="flex h-[14px] shrink-0 items-center bg-[#f3f2f1] pt-[2px] pl-[2px] font-['Noto_Sans',sans-serif] text-[7px] font-medium text-[#444]">
      <span className="w-[35px]">Ready</span>
      <svg width="10" height="10" viewBox="0 0 10 10" fill="none" stroke="#444" strokeWidth="0.900" className="mr-[2px]">
        <circle cx="4.500" cy="1.600" r="1.100" />
        <path d="M.8 3l2.500.8v2L2 9M8.200 3l-2.500.8v1M5.500 5.500l3.700 3.700M9.200 5.500L5.500 9.200" />
      </svg>
      <button>Accessibility: Investigate</button>
    </div>
  );
}

function TaskIcon({ label, open, active, children }: { label: string; open?: boolean; active?: boolean; children: ReactNode }) {
  return (
    <button aria-label={label} className={`flex h-full w-[34px] flex-col items-center ${active ? "bg-[#4b5d67]" : ""}`}>
      <span className="flex flex-1 items-center">{children}</span>
      <span className={`h-[2px] ${active ? "w-full" : "w-[27px]"} ${open ? "bg-[#76b9ed]" : ""}`} />
    </button>
  );
}

function Taskbar() {
  return (
    <footer className="flex h-[26px] shrink-0 items-stretch border-b border-[#17222c] bg-linear-to-r from-[#20333e] via-[#22363f] to-[#1d2c3e]">
      <IconButton label="Start" className="w-[30px] pr-[3px]">
        <svg width="12" height="11" viewBox="0 0 12 11" fill="#fff">
          <path d="M0 1.600L5.200.9v4.300H0zM5.800.8L12 0v5.200H5.800zM0 5.800h5.200v4.300L0 9.400zM5.800 5.800H12V11l-6.200-.8z" />
        </svg>
      </IconButton>
      <label className="flex w-[199px] items-center border border-[#ccc] bg-[#f3f3f3] pr-[2px] pl-[7px]">
        <svg width="13" height="12" viewBox="0 0 13 12" fill="none" stroke="#333">
          <circle cx="8" cy="4.500" r="3.600" />
          <path d="M5.400 7L1 11.300" />
        </svg>
        <input aria-label="Type here to search" placeholder="Type here to search" className="ml-[7px] min-w-0 flex-1 bg-transparent text-[10px] outline-none placeholder:text-[#444]" />
        <span className="flex h-[20px] w-[49px] items-center justify-center rounded-[4px] bg-[#e4e4e4]">
          <svg width="21" height="16" viewBox="0 0 21 16">
            <path d="M7 3V1h7v2" fill="none" stroke="#4a3a2a" strokeWidth="1.400" />
            <rect x=".5" y="2.800" width="20" height="12.700" rx="1" fill="#d08a1c" />
            <path d="M.5 9.500h20v5a1 1 0 01-1 1h-18a1 1 0 01-1-1z" fill="#a8630f" />
            <rect x="9" y="8" width="3" height="3" fill="#ffe08a" />
          </svg>
        </span>
      </label>
      <div className="flex pl-[1px]">
        <TaskIcon label="File Explorer" open>
          <svg width="16" height="13" viewBox="0 0 16 13">
            <path d="M.5.500h5L7 2h8.500v10.500H.5z" fill="#f0b429" />
            <path d="M.5 3.500h15v9H.5z" fill="#ffd868" />
            <path d="M3 12.500V8h10v4.500h-2.500V10h-5v2.500z" fill="#4aa3e0" />
          </svg>
        </TaskIcon>
        <TaskIcon label="Edge">
          <svg width="17" height="15" viewBox="0 0 17 15">
            <ellipse cx="8" cy="7.500" rx="7.500" ry="7.200" fill="#1d7fd0" />
            <path d="M.7 6C2 1.500 6-.2 10 .6c4 .9 6 4 5.500 7H9c1.500-3-1.500-5-4-4.600C3 3.400 1.500 4.500.7 6z" fill="#49c46e" />
            <path d="M.6 6.500C2.500 3.500 7 3 8.500 5.500 5.500 6.500 5.500 12 9 14.600 3.500 15 0 11 .6 6.500z" fill="#1558a8" />
            <path d="M8 9h9v5.500H8z" fill="#e59a2b" />
            <path d="M8 11.500h9v3H8z" fill="#b5650f" />
          </svg>
        </TaskIcon>
        <TaskIcon label="Microsoft Store">
          <svg width="17" height="15" viewBox="0 0 17 15">
            <path d="M5.500 3V1h6v2" fill="none" stroke="#4aa3e0" strokeWidth="1.200" />
            <path d="M.5 3h16v10a1.500 1.500 0 01-1.500 1.500H2A1.500 1.500 0 01.5 13z" fill="#f4f4f4" />
            <path d="M5 5.500h3.200v3H5z" fill="#f25022" />
            <path d="M8.800 5.500H12v3H8.800z" fill="#7fba00" />
            <path d="M5 9h3.200v3H5z" fill="#00a4ef" />
            <path d="M8.800 9H12v3H8.800z" fill="#ffb900" />
          </svg>
        </TaskIcon>
        <TaskIcon label="Mail">
          <svg width="18" height="14" viewBox="0 0 18 14">
            <path d="M.5 4.500L9 0l8.500 4.500v9H.5z" fill="#1466b8" />
            <path d="M2.500 3.500h13v5h-13z" fill="#f4f4f4" />
            <path d="M.5 4.500L9 9.500l8.500-5v9H.5z" fill="#35b1f0" />
            <path d="M.5 13.500L9 8l8.500 5.500z" fill="#1a8fe0" />
          </svg>
        </TaskIcon>
        <TaskIcon label="OBS Studio" open>
          <svg width="16" height="16" viewBox="0 0 16 16">
            <circle cx="8" cy="8" r="7.200" fill="#24242a" stroke="#ddd" strokeWidth="1" />
            <circle cx="8" cy="5" r="2.500" fill="#c8c8c8" />
            <circle cx="5.300" cy="9.800" r="2.500" fill="#c8c8c8" />
            <circle cx="10.700" cy="9.800" r="2.500" fill="#c8c8c8" />
            <circle cx="8.900" cy="5.600" r="1.900" fill="#24242a" />
            <circle cx="5.300" cy="8.700" r="1.900" fill="#24242a" />
            <circle cx="10" cy="10.700" r="1.900" fill="#24242a" />
          </svg>
        </TaskIcon>
        <TaskIcon label="Excel" open active>
          <svg width="16" height="14" viewBox="0 0 16 14">
            <path d="M4 .5h6v4.300H4z" fill="#21a366" />
            <path d="M10 .5h5.500v4.300H10z" fill="#33c481" />
            <path d="M4 4.800h6v4.400H4z" fill="#107c41" />
            <path d="M10 4.800h5.500v4.400H10z" fill="#21a366" />
            <path d="M4 9.200h11.500v4.300H4z" fill="#185c37" />
            <path d="M0 3h8v8H0z" fill="#107c41" />
            <path d="M2.300 4.800l3.400 4.400M5.700 4.800L2.300 9.200" stroke="#fff" strokeWidth="1.200" />
          </svg>
        </TaskIcon>
        <TaskIcon label="Chrome" open>
          <svg width="18" height="16" viewBox="0 0 18 16">
            <circle cx="8" cy="8" r="7.500" fill="#fbc116" />
            <path d="M8 8L1.500 4.200A7.500 7.500 0 007.500 15.500L11 9.500z" fill="#2da94f" />
            <path d="M8 8L1.500 4.200A7.500 7.500 0 0114.500 4.300H8z" fill="#e33b2e" />
            <circle cx="8" cy="8" r="3.500" fill="#fff" />
            <circle cx="8" cy="8" r="2.800" fill="#4285f4" />
            <rect x="9" y="9" width="9" height="6.500" rx="1" fill="#c41c12" />
            <path d="M10 7.500h7v3h-7z" fill="#222" />
            <path d="M12.500 12l2.500 1-2.500 1z" fill="#fff" />
          </svg>
        </TaskIcon>
      </div>
    </footer>
  );
}

export default function App() {
  return (
    <div className="flex min-h-screen flex-col overflow-hidden bg-[#e6e6e6] font-['Open_Sans',sans-serif]">
      <TitleBar />
      <MenuTabs />
      <Ribbon />
      <FormulaBar />
      <ColumnHeads />
      <div className="flex flex-1">
        <RowHeads />
        <Sheet />
      </div>
      <SheetTabs />
      <StatusBar />
      <Taskbar />
    </div>
  );
}
